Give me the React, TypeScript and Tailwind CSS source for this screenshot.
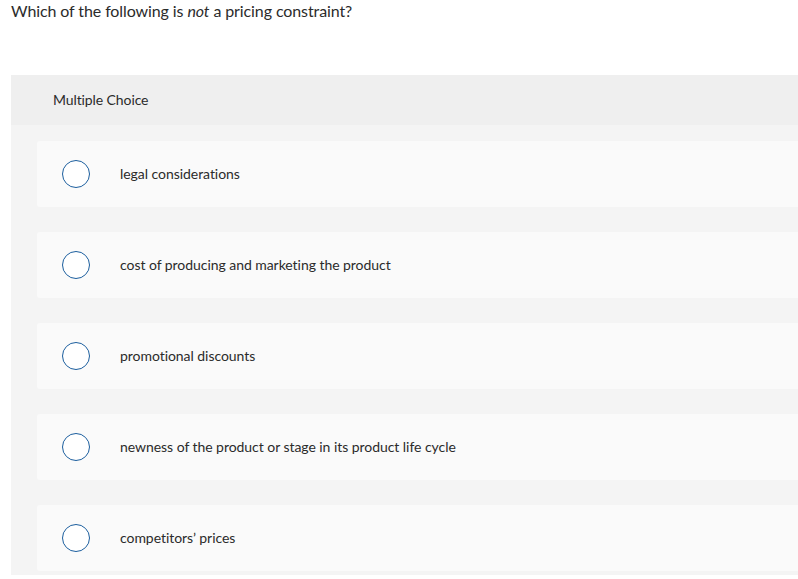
const options = [
  "legal considerations",
  "cost of producing and marketing the product",
  "promotional discounts",
  "newness of the product or stage in its product life cycle",
  "competitors\u2019 prices",
];

const App = () => {
  return (
    <div className="w-[798px] h-[579px] overflow-hidden bg-white text-[#2b2b2b] font-['Lato','Open_Sans',sans-serif]">
      <p className="pt-[2px] pl-[11px] text-[16px] leading-[18px] tracking-[-0.1px]">
        Which of the following is <em>not</em> a pricing constraint?
      </p>
      <div className="mt-[55px] ml-[11px] w-[800px] bg-[#f4f4f4] pb-[4px]">
        <div className="h-[50px] bg-[#efefef] flex items-center pl-[42px] pb-[1px] text-[14px] tracking-[-0.1px]">
          Multiple Choice
        </div>
        <div className="flex flex-col gap-[25px] pt-[16px] pl-[26px]">
          {options.map((opt) => (
            <div key={opt} className="h-[66px] bg-[#fafafa] rounded-[3px] flex items-center">
              <span className="ml-[25px] w-[28px] h-[28px] rounded-full border-[1.5px] border-[#1b5e9e] bg-white shrink-0" />
              <span className="ml-[30px] pb-[1px] text-[14px] tracking-[-0.05px]">{opt}</span>
            </div>
          ))}
        </div>
      </div>
    </div>
  );
};

export default App;
